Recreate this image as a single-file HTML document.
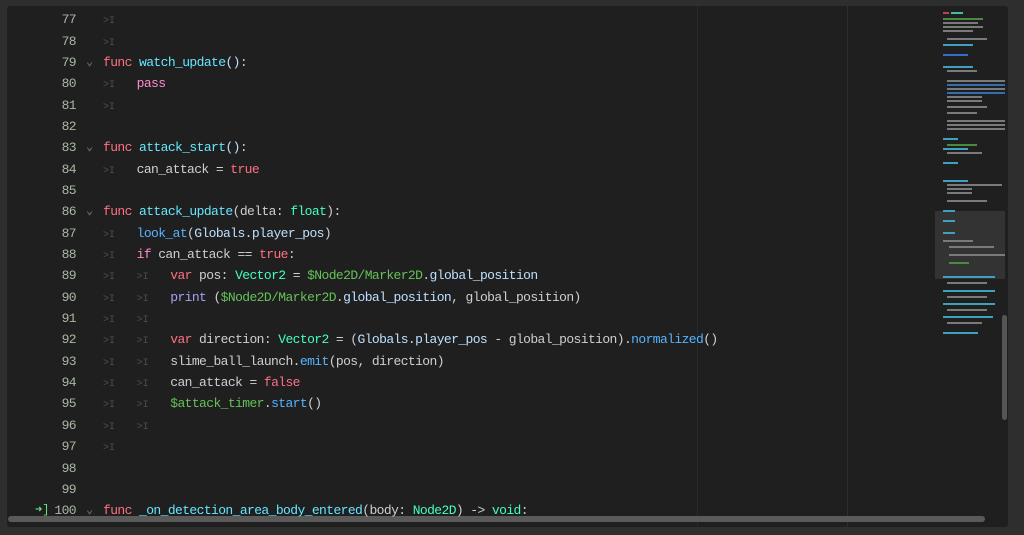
<!DOCTYPE html><html><head><style>
body{margin:0;width:1024px;height:535px;background:#2e2e2e;overflow:hidden;position:relative;font-family:"Liberation Mono","DejaVu Sans Mono",monospace}
.panel{position:absolute;left:7px;top:6px;width:1001px;height:521px;background:#1f1f1f;border-radius:3px;overflow:hidden}
.code{position:absolute;left:0;top:3.3px;width:900px;height:520px;font-size:13px;letter-spacing:-0.6px;line-height:21.35px;color:#cdcfd2}
.ln{position:absolute;left:0;top:0;width:69px;text-align:right;color:#a9b8a4}
.tx{position:absolute;left:96px;top:0;white-space:pre}
.r{display:block;height:21.35px;position:relative}
.k{color:#ff7085}.f{color:#66e6ff}.c{color:#ff8ccc}.t{color:#42ffc2}.s{color:#63c259}.m{color:#bce0ff}.b{color:#a3a3f5}.n{color:#57b3ff}.tab{color:#4a4d55;font-size:10px;letter-spacing:0}
.fold{position:absolute;left:79px;color:#777;font-size:12px}
</style></head><body>
<div class="panel">
<div style="position:absolute;left:690px;top:0;width:1px;height:521px;background:#2a2a2a"></div>
<div style="position:absolute;left:840px;top:0;width:1px;height:521px;background:#2e2e2e"></div>
<div style="position:absolute;left:928px;top:205px;width:70px;height:68px;background:#333"></div>
<div style="position:absolute;left:995px;top:309px;width:5px;height:105px;background:#555;border-radius:3px"></div>
<div style="position:absolute;left:1px;top:510px;width:977px;height:6px;background:#5a5a5a;border-radius:3px"></div>
<svg style="position:absolute;left:928px;top:0" width="70" height="340">
<g fill="#7a7a7a">
<rect x="8" y="6" width="6" height="2" fill="#c04050"/><rect x="16" y="6" width="12" height="2" fill="#40c0a0"/>
<rect x="8" y="12" width="40" height="2" fill="#4a8a40"/><rect x="8" y="16" width="35" height="2"/><rect x="8" y="20" width="40" height="2"/><rect x="8" y="24" width="30" height="2"/>
<rect x="12" y="32" width="40" height="2"/><rect x="8" y="38" width="30" height="2" fill="#40a0c0"/>
<rect x="8" y="48" width="25" height="2" fill="#3070c0"/><rect x="8" y="60" width="30" height="2" fill="#40a0c0"/><rect x="12" y="64" width="30" height="2"/>
<rect x="12" y="74" width="65" height="2"/><rect x="12" y="78" width="65" height="2" fill="#3070b0"/><rect x="12" y="82" width="65" height="2"/><rect x="12" y="86" width="65" height="2" fill="#3070b0"/>
<rect x="12" y="90" width="35" height="2"/><rect x="12" y="94" width="35" height="2"/><rect x="12" y="100" width="40" height="2"/><rect x="12" y="106" width="30" height="2"/><rect x="12" y="114" width="65" height="2"/><rect x="12" y="118" width="65" height="2"/><rect x="12" y="122" width="65" height="2"/>
<rect x="8" y="132" width="15" height="2" fill="#40a0c0"/><rect x="12" y="138" width="30" height="2" fill="#4a8a40"/><rect x="8" y="142" width="25" height="2" fill="#40a0c0"/><rect x="12" y="146" width="35" height="2"/>
<rect x="8" y="156" width="15" height="2" fill="#40a0c0"/><rect x="8" y="174" width="25" height="2" fill="#40a0c0"/><rect x="12" y="178" width="55" height="2"/><rect x="12" y="182" width="25" height="2"/><rect x="12" y="186" width="25" height="2"/><rect x="12" y="194" width="40" height="2"/>
<rect x="8" y="204" width="12" height="2" fill="#40a0c0"/><rect x="8" y="214" width="12" height="2" fill="#40a0c0"/><rect x="8" y="226" width="12" height="2" fill="#40a0c0"/><rect x="8" y="234" width="30" height="2"/><rect x="14" y="240" width="45" height="2"/><rect x="14" y="248" width="60" height="2"/><rect x="14" y="256" width="20" height="2" fill="#4a8a40"/>
<rect x="8" y="270" width="52" height="2" fill="#40a0c0"/><rect x="12" y="276" width="40" height="2"/><rect x="8" y="284" width="52" height="2" fill="#40a0c0"/><rect x="12" y="290" width="40" height="2"/><rect x="8" y="297" width="52" height="2" fill="#40a0c0"/><rect x="12" y="303" width="40" height="2"/><rect x="8" y="310" width="50" height="2" fill="#40a0c0"/><rect x="12" y="316" width="35" height="2"/><rect x="8" y="326" width="35" height="2" fill="#40a0c0"/>
</g></svg>
<div class="code"><div class="ln">77<br>78<br>79<br>80<br>81<br>82<br>83<br>84<br>85<br>86<br>87<br>88<br>89<br>90<br>91<br>92<br>93<br>94<br>95<br>96<br>97<br>98<br>99<br>100</div><div style="position:absolute;left:28px;top:491px;color:#5fe07a;font-size:12px;letter-spacing:0">➜]</div><div class="fold" style="top:42.7px">⌄</div><div class="fold" style="top:128px">⌄</div><div class="fold" style="top:192px">⌄</div><div class="fold" style="top:491px">⌄</div><div class="tx"><span class="r"><span class="tab">&gt;I</span></span><span class="r"><span class="tab">&gt;I</span></span><span class="r"><span class="k">func</span> <span class="f">watch_update</span><span class="m">()</span>:</span><span class="r"><span class="tab">&gt;I</span>   <span class="c">pass</span></span><span class="r"><span class="tab">&gt;I</span></span><span class="r"></span><span class="r"><span class="k">func</span> <span class="f">attack_start</span><span class="m">()</span>:</span><span class="r"><span class="tab">&gt;I</span>   can_attack = <span class="k">true</span></span><span class="r"></span><span class="r"><span class="k">func</span> <span class="f">attack_update</span>(delta: <span class="t">float</span>):</span><span class="r"><span class="tab">&gt;I</span>   <span class="n">look_at</span>(<span class="m">Globals.player_pos</span>)</span><span class="r"><span class="tab">&gt;I</span>   <span class="c">if</span> can_attack == <span class="k">true</span>:</span><span class="r"><span class="tab">&gt;I</span>   <span class="tab">&gt;I</span>   <span class="k">var</span> pos: <span class="t">Vector2</span> = <span class="s">$Node2D/Marker2D</span>.<span class="m">global_position</span></span><span class="r"><span class="tab">&gt;I</span>   <span class="tab">&gt;I</span>   <span class="b">print</span> (<span class="s">$Node2D/Marker2D</span>.<span class="m">global_position</span>, global_position)</span><span class="r"><span class="tab">&gt;I</span>   <span class="tab">&gt;I</span></span><span class="r"><span class="tab">&gt;I</span>   <span class="tab">&gt;I</span>   <span class="k">var</span> direction: <span class="t">Vector2</span> = (<span class="m">Globals.player_pos</span> - global_position).<span class="n">normalized</span>()</span><span class="r"><span class="tab">&gt;I</span>   <span class="tab">&gt;I</span>   slime_ball_launch.<span class="n">emit</span>(pos, direction)</span><span class="r"><span class="tab">&gt;I</span>   <span class="tab">&gt;I</span>   can_attack = <span class="k">false</span></span><span class="r"><span class="tab">&gt;I</span>   <span class="tab">&gt;I</span>   <span class="s">$attack_timer</span>.<span class="n">start</span>()</span><span class="r"><span class="tab">&gt;I</span>   <span class="tab">&gt;I</span></span><span class="r"><span class="tab">&gt;I</span></span><span class="r"></span><span class="r"></span><span class="r"><span class="k">func</span> <span class="f">_on_detection_area_body_entered</span>(body: <span class="t">Node2D</span>) -&gt; <span class="t">void</span>:</span></div></div>
</div>
</body></html>
